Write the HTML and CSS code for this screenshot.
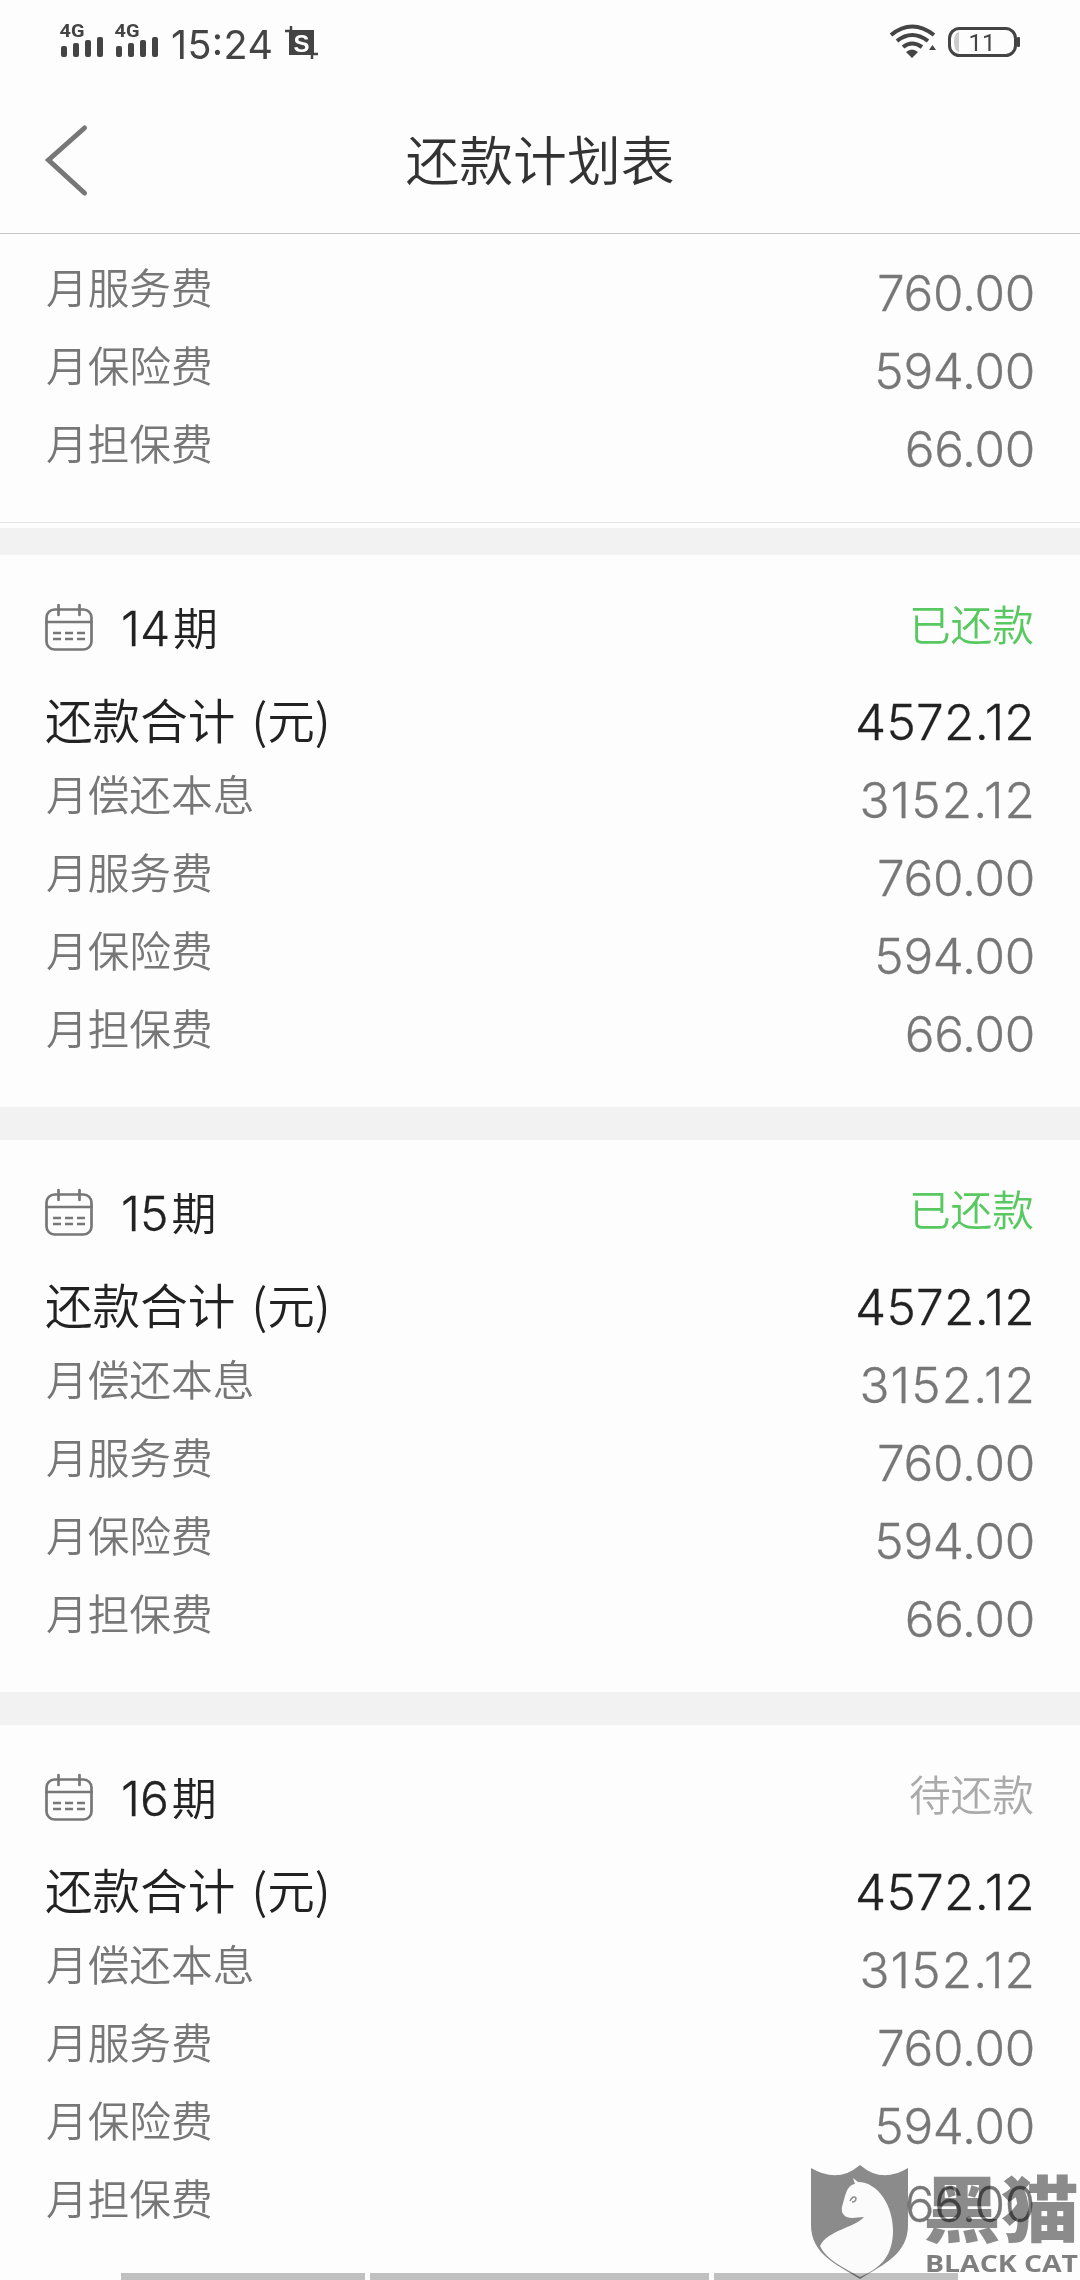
FILE: index.html
```html
<!DOCTYPE html>
<html lang="zh-CN">
<head>
<meta charset="utf-8">
<title>还款计划表</title>
<link rel="stylesheet" href="styles.css">
</head>
<body>
<svg class="defs" width="0" height="0">
  <symbol id="calendar" viewBox="0 0 50 50">
    <g fill="none" stroke="#777" stroke-width="2.7" stroke-linecap="round">
      <rect x="2.5" y="6.5" width="45" height="40" rx="8"/>
      <path d="M2.5 19H47.5M14.5 2V12M35.5 2V12"/>
      <path stroke-linecap="butt" d="M9 30H17M21 30H29M33 30H41M9 36H17M21 36H29M33 36H41"/>
    </g>
  </symbol>
</svg>
<div class="screen">
  <div class="status">
    <svg width="330" height="80" viewBox="0 0 330 80">
      <g fill="#444">
        <g id="sig"><rect x="61" y="46" width="6" height="11" rx="2"/><rect x="73" y="43" width="6" height="14" rx="2"/><rect x="85" y="40" width="6" height="17" rx="2"/><rect x="97" y="37" width="6" height="20" rx="2"/><text class="net" x="59.500" y="36.500" textLength="25" lengthAdjust="spacingAndGlyphs">4G</text></g>
        <use href="#sig" x="55"/>
        <text class="clock" x="171" y="58.500" textLength="102">15:24</text>
        <rect x="289" y="30" width="25" height="25"/>
        <path d="M285 31H290M291 26V31M313 54H318M312 54V59" stroke="#444" stroke-width="2.500"/>
        <text class="shot" x="301.500" y="51.500">S</text>
      </g>
    </svg>
    <svg width="220" height="80" viewBox="860 0 220 80">
      <g fill="none" stroke="#444" stroke-width="4">
        <path d="M891 35Q912 18 934 35M897 41Q912 29 928 41M903 47Q912 40 922 47"/>
        <rect x="949.500" y="28.500" width="66" height="27" rx="10" stroke-width="3"/>
      </g>
      <path d="M906 52Q912 47 918 52L912 58ZM929 50L932.500 45L936 50Z" fill="#444"/>
      <path d="M959 32V52Q954 51 954 42Q954 33 959 32Z" fill="#ccc"/>
      <rect x="1017" y="37" width="3" height="10" rx="1" fill="#444"/>
      <text class="level" x="982" y="50.500">11</text>
    </svg>
  </div>
  <header class="bar">
    <svg class="back" width="50" height="80" viewBox="0 0 50 80"><path d="M42.500 8L6.500 40L42.500 73" fill="none" stroke="#777" stroke-width="5" stroke-linecap="round"/></svg>
    <h1>还款计划表</h1>
  </header>
  <main>
    <section class="period first">
      <div class="row"><span>月服务费</span><b>760.00</b></div>
      <div class="row"><span>月保险费</span><b>594.00</b></div>
      <div class="row"><span>月担保费</span><b>66.00</b></div>
    </section>
    <section class="period">
      <div class="head"><svg width="50" height="50"><use href="#calendar"/></svg><h2>14<small>期</small></h2><em class="paid">已还款</em></div>
      <div class="row total"><span>还款合计 (元)</span><b>4572.12</b></div>
      <div class="row principal"><span>月偿还本息</span><b>3152.12</b></div>
      <div class="row"><span>月服务费</span><b>760.00</b></div>
      <div class="row"><span>月保险费</span><b>594.00</b></div>
      <div class="row"><span>月担保费</span><b>66.00</b></div>
    </section>
    <section class="period">
      <div class="head"><svg width="50" height="50"><use href="#calendar"/></svg><h2>15<small>期</small></h2><em class="paid">已还款</em></div>
      <div class="row total"><span>还款合计 (元)</span><b>4572.12</b></div>
      <div class="row principal"><span>月偿还本息</span><b>3152.12</b></div>
      <div class="row"><span>月服务费</span><b>760.00</b></div>
      <div class="row"><span>月保险费</span><b>594.00</b></div>
      <div class="row"><span>月担保费</span><b>66.00</b></div>
    </section>
    <section class="period">
      <div class="head"><svg width="50" height="50"><use href="#calendar"/></svg><h2>16<small>期</small></h2><em>待还款</em></div>
      <div class="row total"><span>还款合计 (元)</span><b>4572.12</b></div>
      <div class="row principal"><span>月偿还本息</span><b>3152.12</b></div>
      <div class="row"><span>月服务费</span><b>760.00</b></div>
      <div class="row"><span>月保险费</span><b>594.00</b></div>
      <div class="row"><span>月担保费</span><b>66.00</b></div>
    </section>
  </main>
  <div class="nav"><i></i><i></i><i></i></div>
  <svg class="mark" width="300" height="120" viewBox="780 2160 300 120">
    <path fill="#8c8c8c" d="M811 2168Q838 2184 860 2165Q882 2184 908 2168V2225C908 2254 884 2264 860 2279C836 2264 811 2254 811 2225Z"/>
    <path fill="#fdfdfd" d="M853 2178L858 2182C878 2182 893 2206 893 2230C893 2256 881 2268 860 2277C842 2267 826 2259 820 2246C828 2230 854 2228 864 2217C854 2218 847 2219 844 2215Q841 2212 842 2207C845 2198 846 2185 855 2184Z"/>
    <path fill="none" stroke="#8c8c8c" stroke-width="1.500" d="M850 2201Q853 2195 856 2198Q856 2202 852 2202"/>
    <text class="mark-cn" x="923" y="2236" textLength="156" lengthAdjust="spacingAndGlyphs">黑猫</text>
    <text class="mark-en" x="925" y="2272" textLength="153" lengthAdjust="spacingAndGlyphs">BLACK CAT</text>
  </svg>
</div>
</body>
</html>
```
FILE: styles.css
```css
* { box-sizing: border-box; margin: 0; padding: 0; }
body { background: #fdfdfd; font-family: Inter, "Noto Sans CJK SC", sans-serif; font-weight: 300; color: #222; }
.defs { display: none; }
.screen { position: relative; width: 1080px; height: 2280px; overflow: hidden; display: flex; flex-direction: column; }
.status { height: 80px; display: flex; justify-content: space-between; flex: none; }
.net { font: 700 18px Roboto, sans-serif; }
.clock { font: 400 39.500px Inter, sans-serif; }
.shot { font: 700 24px "Liberation Sans", sans-serif; fill: #fff; text-anchor: middle; }
.level { font: 400 24px Roboto, sans-serif; fill: #444; text-anchor: middle; }
.bar { height: 154px; flex: none; border-bottom: 1px solid #c4c4c4; display: grid; grid-template-columns: 100px 1fr 100px; align-items: center; padding-top: 6px; }
.back { margin-left: 42px; }
h1 { font: 350 53.800px/80px "Noto Sans CJK SC", sans-serif; text-align: center; color: #333; padding-bottom: 4px; }
main { flex: none; }
.period { padding: 34px 46px 0; height: 585px; border-bottom: 33px solid #f2f2f2; }
.first { height: 321px; padding-top: 20px; border-bottom-width: 27px; box-shadow: inset 0 -5px #fdfdfd, inset 0 -6px #e4e4e4; }
.period:last-child { border-bottom: 0; }
.head { display: flex; align-items: center; height: 78px; margin-left: -2px; margin-bottom: 16px; }
h2 { font-weight: 300; font-size: 48px; line-height: 78px; margin-left: 27px; padding-top: 2px; flex: 1; -webkit-text-stroke: .3px; }
h2 small { font: 350 45px/70px "Noto Sans CJK SC", sans-serif; margin-left: 3px; -webkit-text-stroke: 0; }
em { font: 350 41.700px/78px "Noto Sans CJK SC", sans-serif; color: #aaa; padding-bottom: 11px; }
.paid { color: #58c860; }
.row { display: flex; justify-content: space-between; align-items: center; height: 78px; color: #777; }
.row span { font: 350 41.700px/70px "Noto Sans CJK SC", sans-serif; padding-bottom: 14px; }
.row b { font-weight: 300; font-size: 49.500px; line-height: 78px; letter-spacing: -.3px; margin-right: -1px; -webkit-text-stroke: .3px; }
.total { color: #222; }
.total b { letter-spacing: .25px; }
.row.total b { letter-spacing: .25px; }
.row.principal b { letter-spacing: 1.1px; margin-right: -2px; }
.row.total span { font-size: 47.600px; padding-bottom: 7px; word-spacing: 5.500px; margin-left: -1px; }
.nav { position: absolute; left: 121px; top: 2273px; width: 837px; height: 7px; display: grid; grid-template-columns: 244px 339px 244px; gap: 5px; }
.nav i { background: #c0c0c0; }
.mark { position: absolute; left: 780px; top: 2160px; mix-blend-mode: multiply; }
.mark-cn { font: 900 72px "Noto Sans CJK SC", sans-serif; fill: #8c8c8c; }
.mark-en { font: 700 23px "Open Sans", sans-serif; fill: #808080; }
```
